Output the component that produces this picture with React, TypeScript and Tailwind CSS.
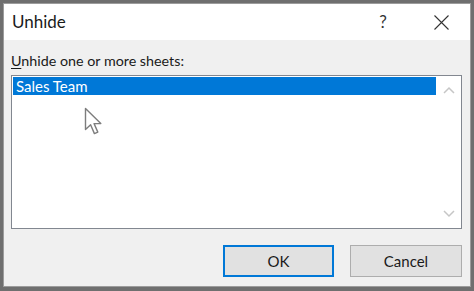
const font = { fontFamily: 'Lato, "Noto Sans", Arial, sans-serif' }

function Pointer() {
  return (
    <svg width="20" height="30" viewBox="0 0 20 30" className="absolute left-[80px] top-[103px]">
      <path
        d="M1.5 1.5 L1.5 22.5 L6.6 17.8 L10.4 26.6 L13.8 25.1 L10.1 16.6 L16.8 16.6 Z"
        fill="#ffffff"
        stroke="#7d7d7d"
        strokeWidth="1.4"
        strokeLinejoin="round"
      />
    </svg>
  )
}

function Chevron({ up }: { up?: boolean }) {
  return (
    <svg width="12" height="8" viewBox="0 0 12 8">
      <path
        d={up ? 'M1 7 L6 2 L11 7' : 'M1 1 L6 6 L11 1'}
        fill="none"
        stroke="#c6c6c6"
        strokeWidth="1.5"
      />
    </svg>
  )
}

export default function App() {
  return (
    <div className="w-[474px] h-[291px] bg-[#6f6f6f] pt-[3px] pl-[3px] overflow-hidden" style={font}>
      <div className="relative w-[468px] h-[284px] border border-[#9c9c9c] bg-[#f0f0f0] flex flex-col">
        {/* title bar */}
        <div className="h-[36px] bg-white flex items-center pl-[8px] shrink-0">
          <span className="text-[17px] text-[#1a1a1a] flex-1">Unhide</span>
          <span className="w-[20px] text-center text-[17px] text-[#333] mr-[41px]">?</span>
          <svg width="15" height="15" viewBox="0 0 15 15" className="mr-[21px]">
            <path d="M0.5 0.5 L14.5 14.5 M14.5 0.5 L0.5 14.5" stroke="#333" strokeWidth="1.1" />
          </svg>
        </div>

        <div className="flex-1 flex flex-col pl-[7px] pr-[8px] pt-[11px]">
          <p className="text-[14.3px] leading-[20px] text-[#1a1a1a]">
            <span className="underline underline-offset-2">U</span>nhide one or more sheets:
          </p>

          <div className="mt-[4px] h-[154px] border border-[#828790] bg-white flex">
            <div className="flex-1 p-[1px]">
              <div className="h-[18px] bg-[#0078d7] text-white text-[15px] leading-[18px] pl-[3px]">
                Sales Team
              </div>
            </div>
            <div className="w-[24px] flex flex-col justify-between items-center py-[10px]">
              <Chevron up />
              <Chevron />
            </div>
          </div>

          <div className="mt-[16px] flex justify-end gap-[16px]">
            <button
              type="button"
              className="w-[111px] h-[32px] border-2 border-[#0078d7] bg-[#e1e1e1] text-[15px] text-[#1a1a1a]"
            >
              OK
            </button>
            <button
              type="button"
              className="w-[112px] h-[32px] border border-[#adadad] bg-[#e1e1e1] text-[15px] text-[#1a1a1a]"
            >
              Cancel
            </button>
          </div>
        </div>

        <Pointer />
      </div>
    </div>
  )
}
